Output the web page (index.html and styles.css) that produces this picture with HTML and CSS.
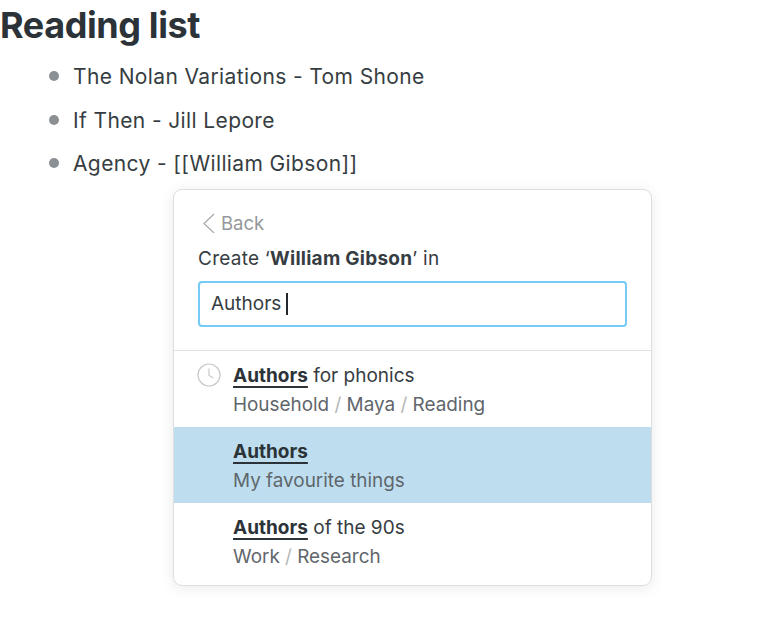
FILE: index.html
```html
<!DOCTYPE html>
<html lang="en">
<head>
    <meta charset="UTF-8">
    <meta name="viewport" content="width=device-width, initial-scale=1.0">
    <title>Reading list</title>
    <link rel="stylesheet" href="styles.css">
</head>
<body>
    <h1 class="page-title">Reading list</h1>

    <ul class="book-list">
        <li>The Nolan Variations - Tom Shone</li>
        <li>If Then - Jill Lepore</li>
        <li>Agency - [[William Gibson]]</li>
    </ul>

    <!-- Link picker popup -->
    <div class="picker">
        <div class="picker-head">
            <div class="back">
                <svg class="back-icon" width="13" height="20" viewBox="0 0 13 20">
                    <path d="M12 1 L2 10.5 L12 20" fill="none" stroke="#a6a9ab" stroke-width="1.2"/>
                </svg>
                <span>Back</span>
            </div>
            <div class="create-label">Create ‘<b>William Gibson</b>’ in</div>
            <div class="search-box">Authors <span class="caret"></span></div>
        </div>

        <div class="result">
            <svg class="clock-icon" width="24" height="24" viewBox="0 0 24 24">
                <circle cx="12" cy="12" r="11" fill="none" stroke="#c6c9cb" stroke-width="1.2"/>
                <path d="M12 5.5 V12.5 L16.5 15" fill="none" stroke="#c6c9cb" stroke-width="1.2"/>
            </svg>
            <div class="result-title"><span class="match">Authors</span> for phonics</div>
            <div class="result-path">Household <i>/</i> Maya <i>/</i> Reading</div>
        </div>
        <div class="result selected">
            <div class="result-title"><span class="match">Authors</span></div>
            <div class="result-path">My favourite things</div>
        </div>
        <div class="result">
            <div class="result-title"><span class="match">Authors</span> of the 90s</div>
            <div class="result-path">Work <i>/</i> Research</div>
        </div>
    </div>
</body>
</html>
```

FILE: styles.css
```css
/* Page */
body {
    margin: 0;
    height: 629px;
    overflow: hidden;
    background-color: #fff;
    font-family: Inter, "Liberation Sans", sans-serif;
    color: #363d42;
}
.page-title {
    margin: 0;
    padding-top: 5px;
    font-size: 36px;
    line-height: 40px;
    font-weight: 700;
    letter-spacing: -0.4px;
    color: #2b3338;
}
/* Bullet list */
.book-list {
    list-style: none;
    margin: 0;
    padding: 10px 0 0 73px;
}
.book-list li {
    position: relative;
    font-size: 21px;
    line-height: 44px;
    height: 43.5px;
    letter-spacing: 0.38px;
}
.book-list li::before {
    content: "";
    position: absolute;
    left: -24px;
    top: 16px;
    width: 10px;
    height: 10px;
    border-radius: 50%;
    background-color: #8b9094;
}
/* Popup */
.picker {
    width: 479px;
    height: 397px;
    margin: 3px 0 0 173px;
    box-sizing: border-box;
    background-color: #fff;
    border: 1px solid #dcdfe1;
    border-radius: 9px;
    box-shadow: 0 2px 14px rgba(0, 0, 0, 0.09);
    overflow: hidden;
}
.picker-head {
    height: 161px;
    box-sizing: border-box;
    padding: 21px 24px 0;
    border-bottom: 1px solid #dfe2e4;
}
.back {
    display: flex;
    align-items: center;
    gap: 6px;
    height: 24px;
    padding-left: 4px;
    font-size: 18.5px;
    color: #94989b;
}
.create-label {
    margin-top: 12px;
    font-size: 19px;
    line-height: 24px;
    letter-spacing: 0.25px;
    color: #363d42;
}
.create-label b {
    font-weight: 700;
}
.search-box {
    display: flex;
    align-items: center;
    gap: 5px;
    height: 46px;
    margin-top: 10px;
    padding-left: 11px;
    box-sizing: border-box;
    border: 2px solid #74cbf5;
    border-radius: 4px;
    font-size: 19px;
    color: #363d42;
}
.caret {
    width: 2px;
    height: 22px;
    background-color: #22282c;
}
/* Result rows */
.result {
    position: relative;
    height: 76px;
    box-sizing: border-box;
    padding: 10px 0 0 59px;
}
.result.selected {
    background-color: #bedef0;
}
.clock-icon {
    position: absolute;
    left: 23px;
    top: 12px;
}
.result-title {
    font-size: 19px;
    line-height: 29px;
    color: #363d42;
}
.match {
    font-weight: 700;
    color: #2b3338;
    text-decoration: underline;
    text-decoration-thickness: 2px;
    text-underline-offset: 4px;
    text-decoration-skip-ink: none;
}
.result-path {
    font-size: 18.9px;
    line-height: 29px;
    color: #5f666b;
}
.result-path i {
    font-style: normal;
    color: #b4b8ba;
}
```
